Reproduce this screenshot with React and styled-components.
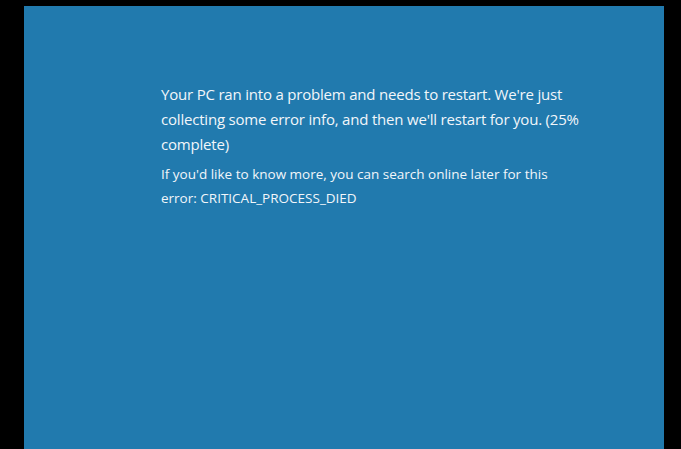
import React from "react";
import styled, { createGlobalStyle } from "styled-components";

const Global = createGlobalStyle`
  html, body { margin: 0; padding: 0; background: #000; }
  body { width: 681px; height: 449px; overflow: hidden; }
`;

const Frame = styled.div`
  width: 681px;
  height: 449px;
  background: #000;
  padding: 6px 17px 0 24px;
  box-sizing: border-box;
  display: flex;
`;

const Screen = styled.main`
  flex: 1;
  background: #217aae;
  padding: 76px 0 0 137px;
  font-family: "Open Sans", "Noto Sans", sans-serif;
  color: #f2f6fa;
`;

const Message = styled.p`
  margin: 0;
  width: ${(p) => p.$width}px;
  font-size: ${(p) => p.$size}px;
  line-height: ${(p) => p.$lh}px;
  letter-spacing: ${(p) => p.$ls || 0}px;
  margin-bottom: ${(p) => p.$gap || 0}px;
`;

export default function App() {
  return (
    <>
      <Global />
      <Frame>
        <Screen>
          <Message $width={432} $size={15} $lh={25} $ls={-0.2} $gap={5}>
            Your PC ran into a problem and needs to restart. We're just collecting some error info, and then we'll restart for you. (25% complete)
          </Message>
          <Message $width={420} $size={13.5} $lh={24}>
            If you'd like to know more, you can search online later for this error: CRITICAL_PROCESS_DIED
          </Message>
        </Screen>
      </Frame>
    </>
  );
}
